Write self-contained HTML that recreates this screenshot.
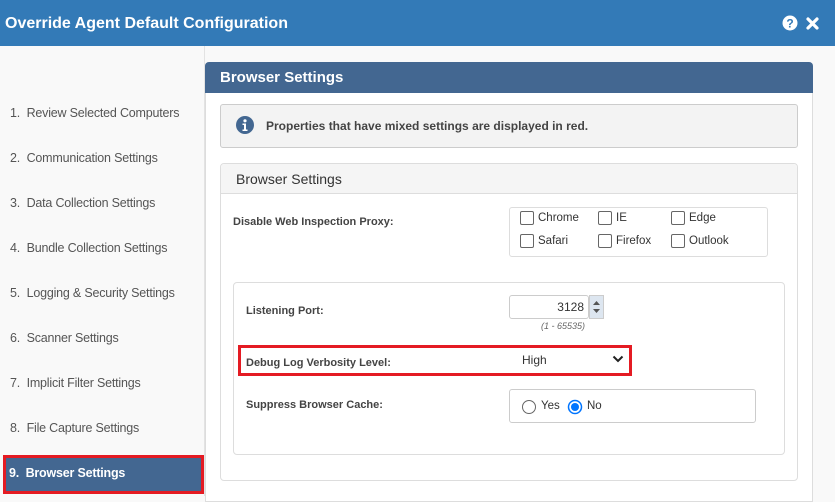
<!DOCTYPE html>
<html><head><style>
*{box-sizing:border-box;margin:0;padding:0}
body{width:835px;height:496px;overflow:hidden;background:#f9f9f9;font-family:"Liberation Sans",sans-serif;position:relative;color:#333}
.abs{position:absolute}
.hdr{left:0;top:0;width:835px;height:46px;background:#337ab7;color:#fff;font-weight:bold;font-size:16px;line-height:47px;padding-left:5px}
.side{left:0;top:46px;width:205px;height:450px;background:#f9f9f9;border-right:1px solid #e3e3e3}
.item{position:absolute;left:10px;font-size:12.5px;color:#555;letter-spacing:-0.2px}
.panel{left:205px;top:62px;width:608px;height:440px;background:#fff;border:1px solid #ddd;border-radius:4px 4px 0 0}
.ph{left:205px;top:62px;width:608px;height:31px;background:#436791;color:#fff;font-weight:bold;font-size:15px;line-height:32px;padding-left:15px;border-radius:4px 4px 0 0}
.lbl{position:absolute;font-size:11px;font-weight:bold;color:#444}
.cb{display:inline-block;width:14px;height:14px;border:1px solid #666;border-radius:2px;vertical-align:middle;margin-right:4px}
.ck{position:absolute;font-size:11.5px;color:#333}
</style></head><body>
<div class="abs hdr">Override Agent Default Configuration</div>
<svg class="abs" style="left:782px;top:15px" width="16" height="16"><circle cx="8" cy="8" r="7.5" fill="#fff"/><text x="8" y="12.5" font-size="12" font-weight="bold" text-anchor="middle" fill="#337ab7" font-family="Liberation Sans">?</text></svg>
<svg class="abs" style="left:806px;top:17px" width="13" height="13"><path d="M2 2L11 11M11 2L2 11" stroke="#fff" stroke-width="3.2" stroke-linecap="round"/></svg>
<div class="abs side"></div>
<div class="item" style="top:106px">1.&nbsp; Review Selected Computers</div>
<div class="item" style="top:151px">2.&nbsp; Communication Settings</div>
<div class="item" style="top:196px">3.&nbsp; Data Collection Settings</div>
<div class="item" style="top:241px">4.&nbsp; Bundle Collection Settings</div>
<div class="item" style="top:286px">5.&nbsp; Logging &amp; Security Settings</div>
<div class="item" style="top:331px">6.&nbsp; Scanner Settings</div>
<div class="item" style="top:376px">7.&nbsp; Implicit Filter Settings</div>
<div class="item" style="top:421px">8.&nbsp; File Capture Settings</div>
<div class="abs" style="left:3px;top:455px;width:201px;height:39px;border:3px solid #e41b23;background:#436791"></div>
<div class="item" style="top:466px;left:9px;color:#fff;font-weight:bold">9.&nbsp; Browser Settings</div>
<div class="abs panel"></div>
<div class="abs ph">Browser Settings</div>
<div class="abs" style="left:220px;top:104px;width:578px;height:44px;background:#f3f3f3;border:1px solid #ccc;border-radius:3px"></div>
<svg class="abs" style="left:236px;top:116px" width="18" height="18"><circle cx="9" cy="9" r="9" fill="#436791"/><circle cx="9" cy="4.8" r="1.6" fill="#fff"/><path d="M6.5 7.5h3.5v6h1.5v1.5h-5v-1.5h1.5v-4.5h-1.5z" fill="#fff"/></svg>
<div class="abs" style="left:266px;top:119px;font-size:12px;font-weight:bold;color:#444">Properties that have mixed settings are displayed in red.</div>
<div class="abs" style="left:220px;top:163px;width:578px;height:318px;border:1px solid #ddd;border-radius:4px;background:#fff"></div>
<div class="abs" style="left:221px;top:164px;width:576px;height:30px;background:#f5f5f5;border-bottom:1px solid #ddd;border-radius:4px 4px 0 0;font-size:14px;line-height:30px;padding-left:15px;color:#333">Browser Settings</div>
<div class="lbl" style="left:233px;top:216px">Disable Web Inspection Proxy:</div>
<div class="abs" style="left:509px;top:207px;width:259px;height:50px;border:1px solid #ddd;border-radius:3px"></div>
<div class="ck" style="left:520px;top:211px"><span class="cb"></span>Chrome</div>
<div class="ck" style="left:598px;top:211px"><span class="cb"></span>IE</div>
<div class="ck" style="left:671px;top:211px"><span class="cb"></span>Edge</div>
<div class="ck" style="left:520px;top:234px"><span class="cb"></span>Safari</div>
<div class="ck" style="left:598px;top:234px"><span class="cb"></span>Firefox</div>
<div class="ck" style="left:671px;top:234px"><span class="cb"></span>Outlook</div>
<div class="abs" style="left:233px;top:282px;width:552px;height:173px;border:1px solid #ddd;border-radius:4px"></div>
<div class="lbl" style="left:246px;top:305px">Listening Port:</div>
<div class="abs" style="left:509px;top:295px;width:80px;height:24px;border:1px solid #ccc;border-radius:3px;font-size:12px;text-align:right;padding-right:4px;line-height:22px">3128</div>
<div class="abs" style="left:589px;top:295px;width:15px;height:24px;background:#dde6f0;border:1px solid #ccc"></div>
<svg class="abs" style="left:589px;top:295px" width="15" height="24"><path d="M4 10L7.5 6L11 10z M4 14L7.5 18L11 14z" fill="#555"/></svg>
<div class="abs" style="left:541px;top:321px;font-size:9px;font-style:italic;color:#666">(1 - 65535)</div>
<div class="abs" style="left:238px;top:345px;width:394px;height:31px;border:3px solid #e41b23"></div>
<div class="lbl" style="left:246px;top:357px">Debug Log Verbosity Level:</div>
<div class="abs" style="left:509px;top:348px;width:120px;height:24px;background:#fff;font-size:12px;padding-left:13px;line-height:24px">High</div>
<svg class="abs" style="left:612px;top:355px" width="12" height="9"><path d="M1.5 1.5L6 6L10.5 1.5" stroke="#222" stroke-width="2" fill="none"/></svg>
<div class="lbl" style="left:246px;top:399px">Suppress Browser Cache:</div>
<div class="abs" style="left:509px;top:389px;width:247px;height:34px;border:1px solid #ccc;border-radius:3px"></div>
<svg class="abs" style="left:521px;top:399px" width="16" height="16"><circle cx="8" cy="8" r="6.5" fill="#fff" stroke="#666"/></svg>
<div class="ck" style="left:541px;top:400px">Yes</div>
<svg class="abs" style="left:567px;top:399px" width="16" height="16"><circle cx="8" cy="8" r="6.5" fill="#fff" stroke="#0075ff" stroke-width="1.5"/><circle cx="8" cy="8" r="4" fill="#0075ff"/></svg>
<div class="ck" style="left:587px;top:400px">No</div>
</body></html>
